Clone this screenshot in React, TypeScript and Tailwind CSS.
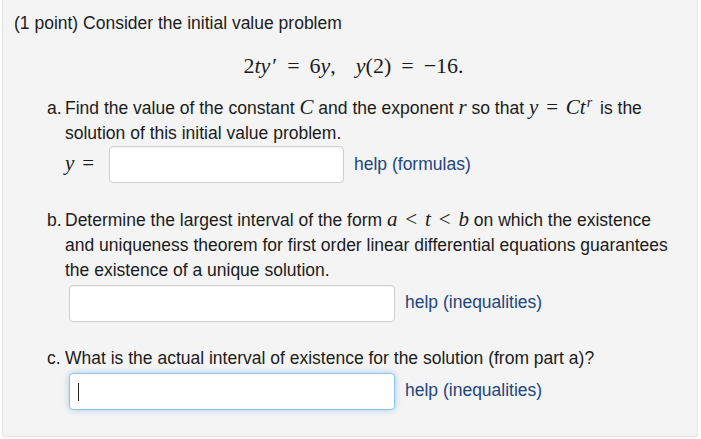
import React from "react";

const SERIF = "'Liberation Serif', 'DejaVu Serif', serif";
const M = ({ children }: { children: React.ReactNode }) => (
  <span className="italic text-[21px] leading-[20px]" style={{ fontFamily: SERIF }}>{children}</span>
);
const R = ({ children }: { children: React.ReactNode }) => (
  <span className="text-[21px] leading-[20px] mx-[3px]" style={{ fontFamily: SERIF }}>{children}</span>
);

function Input({ w, focused }: { w: string; focused?: boolean }) {
  return (
    <div
      className={
        "h-[37px] rounded-[4px] bg-white border relative shrink-0 " +
        w +
        (focused
          ? " border-[#8fc3ec] shadow-[0_0_6px_rgba(102,175,233,0.55)]"
          : " border-[#cfcfcf] shadow-[inset_0_1px_1px_rgba(0,0,0,0.05)]")
      }
    >
      {focused && <div className="absolute left-[8px] top-[9px] w-[1px] h-[18px] bg-[#222]" />}
    </div>
  );
}

export default function App() {
  return (
    <div className="w-[701px] h-[439px] bg-white overflow-hidden text-[17.5px] text-[#1b1b1b]" style={{ fontFamily: "'Liberation Sans', Arial, sans-serif" }}>
      <div className="ml-[2px] w-[696px] h-[437px] border-l border-r border-b border-[#e4e4e4] bg-[#f4f4f4] rounded-b-[3px] pl-[11px] pt-[11px]">
        <div className="leading-[25px]">(1 point) Consider the initial value problem</div>
        <div className="mt-[17px] h-[25px] flex items-center justify-center text-[22px] pr-[4px] whitespace-pre" style={{ fontFamily: SERIF }}>
          <span>2</span><span className="italic">ty</span><span className="ml-[2px]">′</span>
          <span className="mx-[10px]">=</span>
          <span>6</span><span className="italic">y</span><span>,</span>
          <span className="ml-[20px] italic">y</span><span>(2)</span>
          <span className="mx-[10px]">=</span>
          <span>−16.</span>
        </div>

        <div className="mt-[16px] flex pl-[33px] leading-[25px]">
          <span className="w-[18px] shrink-0 pt-[2px]">a.</span>
          <div>
            <div className="whitespace-nowrap pt-[2px]">
              Find the value of the constant <M>C</M> and the exponent <M>r</M> so that <M>y</M> <R>=</R> <M>Ct<sup className="text-[14px] ml-[1px]">r</sup></M>{" "}<span className="ml-[3px]">is the</span>
              <br />
              solution of this initial value problem.
            </div>
            <div className="flex items-center">
              <span className="w-[44px]"><M>y</M> <R>=</R></span>
              <Input w="w-[235px]" />
              <span className="ml-[10px] text-[#22467a]">help (formulas)</span>
            </div>
          </div>
        </div>

        <div className="mt-[23px] flex pl-[33px] leading-[25px]">
          <span className="w-[18px] shrink-0 pt-[2px]">b.</span>
          <div>
            <div className="whitespace-nowrap pt-[2px]">
              Determine the largest interval of the form <M>a</M> <R>&lt;</R> <M>t</M> <R>&lt;</R> <M>b</M> on which the existence
              <br />
              and uniqueness theorem for first order linear differential equations guarantees
              <br />
              the existence of a unique solution.
            </div>
            <div className="mt-[2px] flex items-center pl-[4px]">
              <Input w="w-[326px]" />
              <span className="ml-[10px] -mt-[2px] text-[#22467a]">help (inequalities)</span>
            </div>
          </div>
        </div>

        <div className="mt-[22px] flex pl-[33px] leading-[25px]">
          <span className="w-[18px] shrink-0 pt-[2px]">c.</span>
          <div>
            <div className="whitespace-nowrap pt-[2px]">What is the actual interval of existence for the solution (from part a)?</div>
            <div className="mt-[2px] flex items-center pl-[4px]">
              <Input w="w-[326px]" focused />
              <span className="ml-[10px] -mt-[2px] text-[#22467a]">help (inequalities)</span>
            </div>
          </div>
        </div>
      </div>
    </div>
  );
}
